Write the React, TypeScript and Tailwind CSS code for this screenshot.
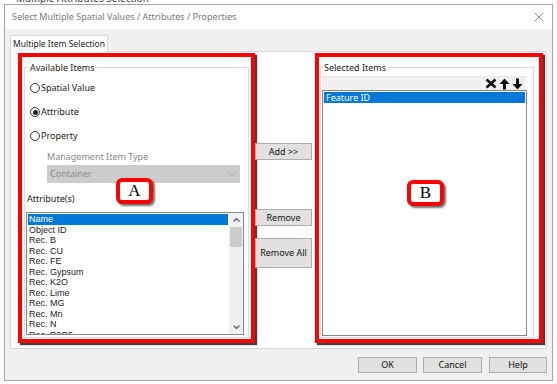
import { ReactNode } from 'react'

const attributes = [
  'Name',
  'Object ID',
  'Rec. B',
  'Rec. CU',
  'Rec. FE',
  'Rec. Gypsum',
  'Rec. K2O',
  'Rec. Lime',
  'Rec. MG',
  'Rec. Mn',
  'Rec. N',
  'Rec. P2O5',
]

function Radio({ label, checked }: { label: string; checked?: boolean }) {
  return (
    <div className="flex h-[24px] items-center pl-[4px]">
      <span className="flex h-[10px] w-[10px] items-center justify-center rounded-full border border-[#333] bg-white">
        {checked && <span className="h-[5px] w-[5px] rounded-full bg-[#222]" />}
      </span>
      <span className="ml-[1px]">{label}</span>
    </div>
  )
}

function Btn({ children, className = '' }: { children: ReactNode; className?: string }) {
  return (
    <div
      className={`flex items-center justify-center whitespace-nowrap border border-[#adadad] bg-[#e1e1e1] text-[#111] ${className}`}
    >
      {children}
    </div>
  )
}

function Badge({ letter, className }: { letter: string; className: string }) {
  return (
    <div
      className={`absolute flex h-[26px] w-[37px] items-center justify-center rounded-[6px] border-[4px] border-[#ff0000] bg-white font-['Liberation_Serif',serif] text-[17px] text-black shadow-[2px_2px_2px_rgba(0,0,0,0.55)] ${className}`}
    >
      {letter}
    </div>
  )
}

export default function App() {
  return (
    <div className="relative h-[384px] w-[557px] overflow-hidden bg-white font-['Noto_Sans',sans-serif] text-[9px] leading-[12px] text-[#1a1a1a]">
      {/* window behind, barely visible */}
      <div className="h-[4px] overflow-hidden pl-[16px] text-[10px] text-[#444]">
        <div className="-mt-[8px]">Multiple Attributes Selection</div>
      </div>

      <div className="ml-[4px] flex h-[377px] w-[549px] flex-col border border-[#a6a6a6]">
        {/* title bar */}
        <div className="flex h-[24px] items-center justify-between bg-white pl-[7px] pr-[8px] text-[#7a7a7a]">
          <span>Select Multiple Spatial Values / Attributes / Properties</span>
          <svg width="10" height="10" viewBox="0 0 10 10">
            <path d="M1 1L9 9M9 1L1 9" stroke="#8a8a8a" strokeWidth="1" />
          </svg>
        </div>

        <div className="flex flex-1 flex-col bg-[#f0f0f0] px-[5px] pt-[6px]">
          {/* tab */}
          <div className="relative z-10 -mb-px flex h-[17px] w-[98px] items-center justify-center whitespace-nowrap border border-b-0 border-[#d9d9d9] bg-white text-[8.5px]">
            Multiple Item Selection
          </div>

          {/* tab panel */}
          <div className="flex h-[298px] w-full border border-[#d9d9d9] bg-white pl-[7px] pt-[1px]">
            {/* A */}
            <div className="flex h-[290px] w-[237px] flex-col border-[4px] border-[#ff0000] bg-white px-[2px] pb-[1px] shadow-[2px_2px_1px_rgba(0,0,0,0.75)]">
              <fieldset className="mt-[5px] flex flex-1 flex-col border border-[#dcdcdc] px-[1px]">
                <legend className="ml-[3px] px-[1px] leading-[11px]">Available Items</legend>
                <div className="pt-[3px]">
                  <Radio label="Spatial Value" />
                  <Radio label="Attribute" checked />
                  <div className="h-[25px]">
                    <Radio label="Property" />
                  </div>
                </div>
                <div className="ml-[21px] mt-[2px] text-[#8a8a8a]">Management Item Type</div>
                <div className="ml-[21px] mt-[2px] flex h-[18px] w-[193px] items-center justify-between bg-[#cccccc] pl-[3px] pr-[4px] text-[#8a8a8a]">
                  <span>Container</span>
                  <svg width="8" height="5" viewBox="0 0 8 5">
                    <path d="M0.5 0.5L4 4L7.5 0.5" stroke="#a8a8a8" strokeWidth="1" fill="none" />
                  </svg>
                </div>
                <div className="ml-[1px] mt-[10px]">Attribute(s)</div>
                <div className="mt-[7px] flex h-[123px] w-[218px] overflow-hidden border border-[#828790] bg-white">
                  <div className="flex-1 overflow-hidden px-[1px] pt-[1px] font-['Liberation_Sans',sans-serif]">
                    {attributes.map((a, i) => (
                      <div
                        key={a}
                        className={`h-[10.5px] overflow-hidden pl-[1px] leading-[10.5px] ${i === 0 ? 'bg-[#0078d7] text-white' : ''}`}
                      >
                        {a}
                      </div>
                    ))}
                  </div>
                  <div className="flex w-[14px] flex-col bg-[#f0f0f0]">
                    <div className="flex h-[14px] items-center justify-center">
                      <svg width="7" height="4" viewBox="0 0 7 4">
                        <path d="M0.5 3.5L3.5 0.5L6.5 3.5" stroke="#606060" strokeWidth="1.2" fill="none" />
                      </svg>
                    </div>
                    <div className="mx-[1px] h-[20px] bg-[#cdcdcd]" />
                    <div className="flex-1" />
                    <div className="flex h-[14px] items-center justify-center">
                      <svg width="7" height="4" viewBox="0 0 7 4">
                        <path d="M0.5 0.5L3.5 3.5L6.5 0.5" stroke="#606060" strokeWidth="1.2" fill="none" />
                      </svg>
                    </div>
                  </div>
                </div>
              </fieldset>
            </div>

            {/* buttons */}
            <div className="flex w-[60px] flex-col">
              <Btn className="mt-[90px] h-[17px] w-[57px]">Add &gt;&gt;</Btn>
              <Btn className="mt-[49px] h-[17px] w-[57px]">Remove</Btn>
              <Btn className="mt-[12px] h-[30px] w-[57px]">Remove All</Btn>
            </div>

            {/* B */}
            <div className="flex h-[290px] w-[228px] flex-col border-[4px] border-[#ff0000] bg-white pb-[1px] pl-[1px] pr-[5px] shadow-[2px_2px_1px_rgba(0,0,0,0.75)]">
              <fieldset className="mt-[5px] flex flex-1 flex-col border border-[#dcdcdc] pl-[1px]">
                <legend className="ml-[1px] px-[1px] leading-[11px]">Selected Items</legend>
                <div className="mt-[3px] flex h-[14px] w-[204px] items-center justify-end gap-[2px] border-t border-[#e6e6e6] bg-[#f0f0f0] pr-[3px]">
                  <svg width="12" height="11" viewBox="0 0 12 11">
                    <path d="M1.5 1.5L10.5 9.5M10.5 1.5L1.5 9.5" stroke="#111" strokeWidth="2.6" />
                  </svg>
                  <svg width="11" height="12" viewBox="0 0 11 12">
                    <path d="M5.5 0.5L10.5 6H7V11.5H4V6H0.5Z" fill="#111" />
                  </svg>
                  <svg width="11" height="12" viewBox="0 0 11 12">
                    <path d="M5.5 11.5L10.5 6H7V0.5H4V6H0.5Z" fill="#111" />
                  </svg>
                </div>
                <div className="h-[246px] w-[205px] border border-[#828790] bg-white px-[1px] pt-[1px]">
                  <div className="h-[11px] bg-[#0078d7] pl-[2px] leading-[11px] text-white">Feature ID</div>
                </div>
              </fieldset>
            </div>
          </div>

          {/* dialog buttons */}
          <div className="mt-[8px] flex justify-end">
            <Btn className="h-[16px] w-[59px] border-[#0078d7]">OK</Btn>
            <Btn className="ml-[6px] h-[16px] w-[59px]">Cancel</Btn>
            <Btn className="ml-[7px] h-[16px] w-[58px]">Help</Btn>
          </div>
        </div>
      </div>

      <Badge letter="A" className="left-[116px] top-[178px]" />
      <Badge letter="B" className="left-[407px] top-[180px]" />
    </div>
  )
}
